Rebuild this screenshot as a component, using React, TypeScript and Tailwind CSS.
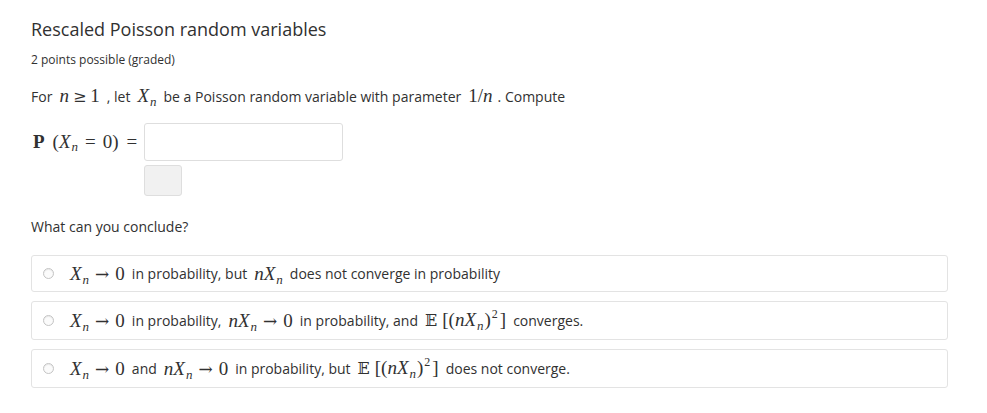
import React from 'react';

const mathFont = "[font-family:'Liberation_Serif','DejaVu_Serif',serif]";

const M: React.FC<{ children: React.ReactNode }> = ({ children }) => (
  <span className={`mx-[7px] inline-flex items-baseline whitespace-nowrap text-[19px] leading-[20px] ${mathFont}`}>
    {children}
  </span>
);

const I: React.FC<{ children: React.ReactNode }> = ({ children }) => <i className="italic">{children}</i>;

const Xn = () => (
  <>
    <I>X</I>
    <span className="relative top-[4px] ml-[1px] text-[13px] italic leading-none">n</span>
  </>
);

const Arrow = () => <span className="mx-[6px] text-[17px] [font-family:'DejaVu_Serif',serif]">→</span>;

const ESq = () => (
  <>
    <span className="text-[16px] font-light [font-family:'DejaVu_Serif',serif]">𝔼</span>
    <span className="ml-[5px]">[(</span>
    <I>n</I>
    <Xn />
    <span className="ml-[1px]">)</span>
    <span className="relative top-[-8px] ml-[1px] text-[12px] leading-none">2</span>
    <span className="ml-[2px]">]</span>
  </>
);

const options: React.ReactNode[] = [
  <>
    <M>
      <Xn />
      <Arrow />0
    </M>
    in probability, but
    <M>
      <I>n</I>
      <Xn />
    </M>
    does not converge in probability
  </>,
  <>
    <M>
      <Xn />
      <Arrow />0
    </M>
    in probability,
    <M>
      <I>n</I>
      <Xn />
      <Arrow />0
    </M>
    in probability, and
    <M>
      <ESq />
    </M>
    converges.
  </>,
  <>
    <M>
      <Xn />
      <Arrow />0
    </M>
    and
    <M>
      <I>n</I>
      <Xn />
      <Arrow />0
    </M>
    in probability, but
    <M>
      <ESq />
    </M>
    does not converge.
  </>,
];

const heights = ['h-[37px]', 'h-[39px]', 'h-[39px]'];

const App: React.FC = () => {
  return (
    <div className="min-h-screen bg-white pl-[31px] pr-[39px] pt-[17px] text-[#313131] [font-family:'Open_Sans',sans-serif]">
      <h2 className="text-[18px] leading-[24px] font-normal">Rescaled Poisson random variables</h2>
      <p className="mt-[11px] text-[12px] leading-[16px]">2 points possible (graded)</p>

      <p className="mt-[18px] flex items-baseline text-[14px] leading-[22px]">
        For
        <M>
          <I>n</I>
          <span className="mx-[4px] [font-family:'DejaVu_Serif',serif] text-[16px]">≥</span>1
        </M>
        , let
        <M>
          <Xn />
        </M>
        be a Poisson random variable with parameter
        <M>
          1/<I>n</I>
        </M>
        <span className="-ml-[2px]">. Compute</span>
      </p>

      <div className="mt-[15px] flex">
        <div className={`flex h-[38px] items-center pr-[7px] text-[19px] ${mathFont}`}>
          <b className="ml-[2px] font-bold">P</b>
          <span className="ml-[8px]">(</span>
          <Xn />
          <span className="mx-[7px]">=</span>0)
          <span className="ml-[8px]">=</span>
        </div>
        <div className="flex flex-col gap-[4px]">
          <input className="h-[38px] w-[199px] rounded-[3px] border border-[#dedede] bg-white outline-none" />
          <button className="h-[31px] w-[38px] rounded-[3px] border border-[#dedede] bg-[#f1f1f1]" />
        </div>
      </div>

      <p className="mt-[20px] text-[14px] leading-[22px]">What can you conclude?</p>

      <div className="mt-[17px] flex w-[917px] flex-col gap-[9px]">
        {options.map((opt, i) => (
          <label
            key={i}
            className={`flex ${heights[i]} items-center rounded-[3px] border border-[#e3e3e3] pl-[11px] text-[14px]`}
          >
            <span className="mr-[9px] h-[11px] w-[11px] shrink-0 rounded-full border border-[#c4c4c4] bg-[#fbfbfb] shadow-[inset_0_1px_1px_rgba(0,0,0,0.08)]" />
            {opt}
          </label>
        ))}
      </div>
    </div>
  );
};

export default App;
